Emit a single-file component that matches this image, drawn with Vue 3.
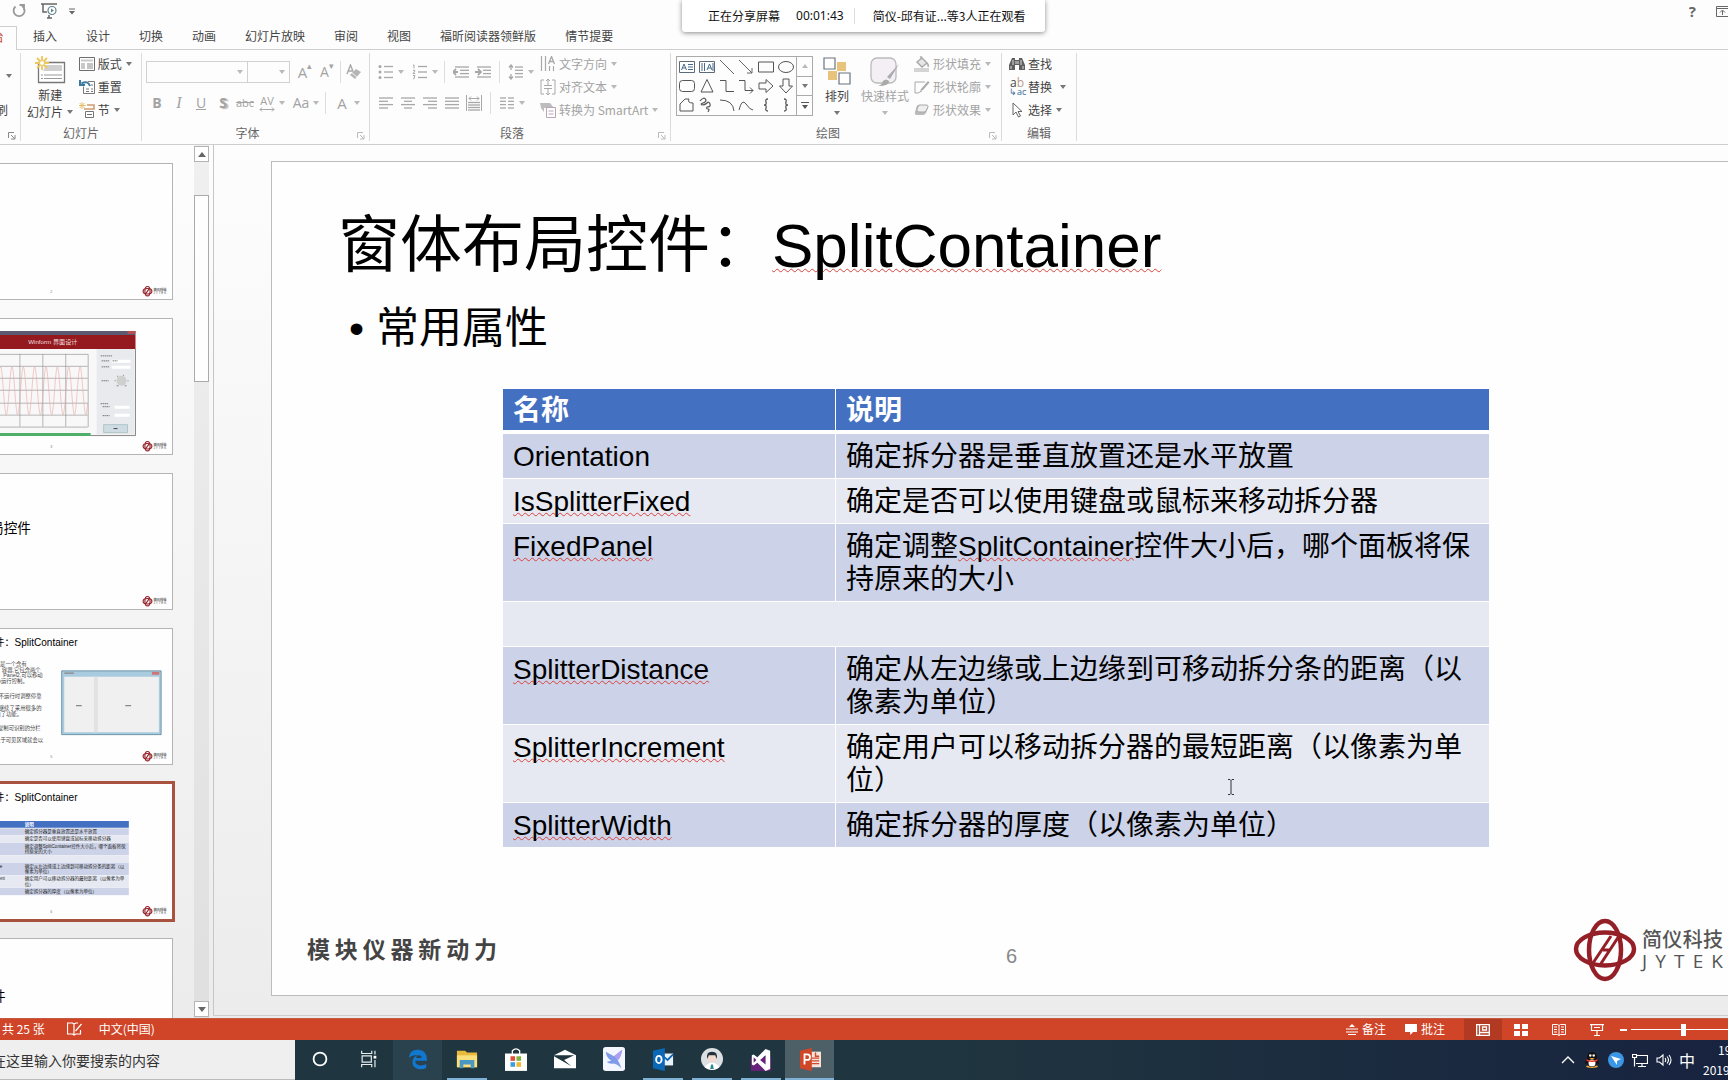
<script setup>
const tabs = ['插入', '设计', '切换', '动画', '幻灯片放映', '审阅', '视图', '福昕阅读器领鲜版', '情节提要']

const rows = [
  { name: 'Orientation', ok: true, text: ['确定拆分器是垂直放置还是水平放置'] },
  { name: 'IsSplitterFixed', text: ['确定是否可以使用键盘或鼠标来移动拆分器'] },
  { name: 'FixedPanel', text: ['确定调整', 'SplitContainer', '控件大小后，哪个面板将保持原来的大小'] },
  { blank: true },
  { name: 'SplitterDistance', text: ['确定从左边缘或上边缘到可移动拆分条的距离（以像素为单位）'] },
  { name: 'SplitterIncrement', text: ['确定用户可以移动拆分器的最短距离（以像素为单位）'], cursor: true },
  { name: 'SplitterWidth', text: ['确定拆分器的厚度（以像素为单位）'] },
]

const miniRows = [
  { y: 273, h: 43, fill: '#ccd2e7', a: 'Orientation', b: ['确定拆分器是垂直放置还是水平放置'] },
  { y: 317, h: 44, fill: '#e6e9f2', a: 'IsSplitterFixed', b: ['确定是否可以使用键盘或鼠标来移动拆分器'] },
  { y: 362, h: 77, fill: '#ccd2e7', a: 'FixedPanel', b: ['确定调整SplitContainer控件大小后，哪个面板将保', '持原来的大小'] },
  { y: 440, h: 44, fill: '#e6e9f2', a: '', b: [] },
  { y: 485, h: 77, fill: '#ccd2e7', a: 'SplitterDistance', b: ['确定从左边缘或上边缘到可移动拆分条的距离（以', '像素为单位）'] },
  { y: 563, h: 77, fill: '#e6e9f2', a: 'SplitterIncrement', b: ['确定用户可以移动拆分器的最短距离（以像素为单', '位）'] },
  { y: 641, h: 44, fill: '#ccd2e7', a: 'SplitterWidth', b: ['确定拆分器的厚度（以像素为单位）'] },
]

const notes = [
  { x: 589, y: 228, t: '是一个含有' },
  { x: 675, y: 263, t: '容器,它包含两个' },
  { x: 687, y: 298, t: 'Panel2,可以移动' },
  { x: 595, y: 333, t: '小运行控制。' },
  { x: 680, y: 427, t: '不运行时调整停靠' },
  { x: 680, y: 499, t: '继续了采用很多的' },
  { x: 560, y: 536, t: '加了功能。' },
  { x: 675, y: 624, t: '复制可识别的分栏' },
  { x: 690, y: 697, t: '大于可见区域就会以' },
]

const thumbs = [
  { kind: 'blank', num: '2' },
  { kind: 'form', num: '3' },
  { kind: 'section', text: '局控件', x: 615, y: 364 },
  { kind: 'intro', num: '5' },
  { kind: 'table', num: '6', active: true },
  { kind: 'section', text: '件', x: 458, y: 380 },
]

const wave = Array.from({ length: 177 }, (_, n) => {
  const x = n / 2
  return `${n ? 'L' : 'M'}${x} ${(72 - 24 * Math.cos(((x - 12) / 11.4) * 2 * Math.PI)).toFixed(1)}`
}).join('')

const g = '#a8a8a8'
const lines = (arr) => arr.map(([x, y, w]) => `<path d="M${x} ${y}h${w}" stroke="${g}" stroke-width="1.3"/>`).join('')

const icons = {
  bullets: `<circle cx="2" cy="2.5" r="1.5" fill="${g}"/><circle cx="2" cy="8" r="1.5" fill="${g}"/><circle cx="2" cy="13.5" r="1.5" fill="${g}"/>` + lines([[6, 2.5, 9], [6, 8, 9], [6, 13.5, 9]]),
  numbers: `<path d="M1 1.500l1-.7v3.600M1 6.500q2-1 2 .5l-2 2.500h2.200M1 11.500h2l-1 1.500q2 1-1 2" stroke="${g}" fill="none"/>` + lines([[6, 2.5, 9], [6, 8, 9], [6, 13.5, 9]]),
  outdent: `<path d="M5 8H0M3 5L0 8l3 3" stroke="${g}" stroke-width="1.8" fill="none"/>` + lines([[2, 3, 14], [7, 6.3, 9], [7, 9.6, 9], [2, 13, 14]]),
  indent: `<path d="M0 8h5M3 5l3 3-3 3" stroke="${g}" stroke-width="1.8" fill="none"/>` + lines([[2, 3, 14], [8, 6.3, 8], [8, 9.6, 8], [2, 13, 14]]),
  spacing: `<path d="M3 1v5M1 3.500l2-2.500 2 2.500M3 10v5M1 12.500L3 15l2-2.500" stroke="${g}" stroke-width="1.3" fill="none"/>` + lines([[7, 3, 8], [7, 6.3, 8], [7, 9.6, 8], [7, 13, 8]]),
  left: lines([[1, 3, 14], [1, 6.3, 9], [1, 9.6, 14], [1, 13, 9]]),
  center: lines([[1, 3, 14], [4, 6.3, 8], [1, 9.6, 14], [4, 13, 8]]),
  right: lines([[1, 3, 14], [6, 6.3, 9], [1, 9.6, 14], [6, 13, 9]]),
  justify: lines([[1, 3, 14], [1, 6.3, 14], [1, 9.6, 14], [1, 13, 14]]),
  distribute: `<path d="M.5 0v16M15.500 0v16M3 3.500h10M5 1.500L3 3.500l2 2M11 1.500l2 2-2 2" stroke="${g}" fill="none"/>` + lines([[2, 7.5, 12], [2, 10, 12], [2, 12.5, 12], [2, 15, 12]]),
  columns: lines([[1, 3, 6], [1, 6.3, 6], [1, 9.6, 6], [1, 13, 6], [9, 3, 6], [9, 6.3, 6], [9, 9.6, 6], [9, 13, 6]]),
  direction: `<path d="M1.500 0v15M5.500 0v15M9.500 10v5M13.500 10v5" stroke="${g}" stroke-width="1.2"/><path d="M8.500 8l3-7.500 3 7.500M9.500 5.500h4" stroke="${g}" stroke-width="1.300" fill="none"/>`,
  alignText: `<path d="M4 1H1v14h3M12 1h3v14h-3M4 6.500h8M4 9.500h8M8 0v6M6 2l2-2 2 2M8 10v6M6 14l2 2 2-2" stroke="${g}" fill="none"/>`,
  smartart: `<path d="M0 1h10l4 5H4v4L1 6z" fill="#bdbdbd"/><path d="M6.500 5.500h9v10h-9zM8.500 9h5M8.500 12h5" fill="#fff" stroke="#b9a5b5"/>`,
  layout: `<path d="M.5 1.500h15v13H.5z" fill="#fff" stroke="#6d6d6d"/><path d="M2 3.500h12v2H2zM2 7h4v6H2z" fill="#c9c9c9"/><path d="M8 8h6M8 10h6M8 12h6" stroke="#8a8a8a"/>`,
  reset: `<path d="M4.500 7.500v7h11v-12H9M7 10h3M12 10h2M7 12.500h3M12 12.500h2M12 6h2" fill="none" stroke="#7a7a7a"/><path d="M11 7Q9 1 2.500 4.500M1 1v5h5" fill="none" stroke="#3c7aa0" stroke-width="2"/>`,
  section: `<path d="M3 0v7M0 3.500h7M.7 1l4.800 5M5.500 1L.7 6" stroke="#e3bd62" stroke-width=".9"/><path d="M8 3h7v4H5" stroke="#d19a6e" fill="none" stroke-width="1.500"/><path d="M6.500 9.500h8v6h-8zM8 12.500h5" stroke="#747474" fill="none"/>`,
  fill: `<path d="M3 6l5-4 5 5-5 4zM7 4V0M12 7q3 1 2 4" stroke="${g}" stroke-width="1.400" fill="#e6e6e6"/><path d="M0 12h15v4H0z" fill="#d4d4d4"/>`,
  outline: `<path d="M11 3H1v11h3l4-2" stroke="${g}" fill="none"/><path d="M7 10L14 2l1.500 1.500L9 11l-3 1z" fill="#aaa"/>`,
  effect: `<path d="M4 3h8q3 0 2 3l-2 5q-1 2-3 2H3q-3 0-2-3l1.500-5Q3 3 4 3z" fill="#bbb"/><path d="M5 3h7q3 0 1.500 3L12 9q-1 1-2 1H5Q2 10 3 7z" fill="#eee" stroke="${g}"/>`,
  find: `<path d="M3 2h3v2h4V2h3l3 7v5h-6v-5H6v5H0V9z" fill="#5f5f5f"/><path d="M7 5v3M9 5v3M4 4v5M12 4v5M2 10v3M14 10v3" stroke="#ddd"/>`,
  select: `<path d="M4 1v12l3-3 2.500 5 2-1L9 9.500h4z" fill="#fff" stroke="#666"/>`,
  eraser: `<path d="M1 10L4.500 1 8 10M2.500 7H6" fill="none" stroke="${g}" stroke-width="1.400"/><path d="M10 5l5 3-6 7-5-4z" fill="#b5b5b5"/><path d="M6 9l5 4" stroke="#eee"/>`,
}

const paraTop = ['bullets', 'v', 'gap', 'numbers', 'v', 'sep', 'outdent', 'indent', 'sep', 'spacing', 'v']
const paraBottom = ['left', 'center', 'right', 'justify', 'distribute', 'sep', 'columns', 'v']
const slideTools = [{ i: 'layout', t: '版式', v: true }, { i: 'reset', t: '重置' }, { i: 'section', t: '节', v: true }]
const textTools = [{ i: 'direction', t: '文字方向' }, { i: 'alignText', t: '对齐文本' }, { i: 'smartart', t: '转换为 SmartArt' }]
const shapeTools = [{ i: 'fill', t: '形状填充' }, { i: 'outline', t: '形状轮廓' }, { i: 'effect', t: '形状效果' }]

const shapes = [
  '<path d="M.5 2.500h15v11H.5z" fill="#fff" stroke="#5d6b78"/><path d="M2.500 11L5 5l2.500 6M3.500 9h3M9 5.500h5M9 8h5M9 10.500h5" stroke="#46698c" fill="none"/>',
  '<path d="M.5 2.500h15v11H.5z" fill="#fff" stroke="#5d6b78"/><path d="M3 4v8M5.500 4v8M8 11l2.500-6 2.500 6M9 9h3M14 4v8" stroke="#46698c" fill="none"/>',
  '<path d="M1 1l14 14" stroke="#666"/>',
  '<path d="M1 1l13 13M14 9v5H9" stroke="#666" fill="none"/>',
  '<path d="M.5 3h15v10H.5z" stroke="#555" fill="none"/>',
  '<ellipse cx="8" cy="8" rx="7.500" ry="5.500" stroke="#555" fill="none"/>',
  '<rect x=".5" y="2.500" width="15" height="11" rx="3" stroke="#555" fill="none"/>',
  '<path d="M8 1.500L14 14H2z" stroke="#555" fill="none"/>',
  '<path d="M1 2.500h6v11h8" stroke="#555" fill="none"/>',
  '<path d="M1 2.500h6v10h8M12 9.500l3 3-3 3" stroke="#555" fill="none"/>',
  '<path d="M1 5h7V1.500L15 8l-7 6.500V11H1z" stroke="#555" fill="none"/>',
  '<path d="M5 1h6v7h3.500L8 15 1.500 8H5z" stroke="#555" fill="none"/>',
  '<path d="M1 14V7l5-5h4q-2 4 4 4v8z" stroke="#555" fill="none"/>',
  '<path d="M1 4q4-5 6-1 0 2-3 3t-1 2q3 0 5-2t3 1-3 3q-1 2 1 2t0 3" stroke="#555" fill="none" stroke-width="1.200"/>',
  '<path d="M1 3q13 0 14 11" stroke="#555" fill="none"/>',
  '<path d="M1 13Q4 1 8 7t7 6" stroke="#555" fill="none"/>',
  '<path d="M10 2Q7 2 8 5t-2 3q3 0 2 3t2 3" stroke="#555" fill="none" stroke-width="1.300"/>',
  '<path d="M6 2q3 0 2 3t2 3q-3 0-2 3t-2 3" stroke="#555" fill="none" stroke-width="1.300"/>',
]

const apps = [
  { n: 'Cortana', s: '<circle cx="12" cy="12" r="7" fill="none" stroke="#fff" stroke-width="2"/>' },
  { n: '任务视图', s: '<path d="M4 3v3h11V3M4 21v-3h11v3M4.500 8.500h10v7h-10zM18.500 3v4M18.500 13v8" fill="none" stroke="#e8edf0" stroke-width="1.300"/><path d="M17 8.500h3v3h-3z" fill="#fff"/>' },
  { n: 'Edge', hover: true, s: '<path d="M2 11Q3 1 13 2q9 1 9 12H9q0 5 6 5 4 0 6-1.500v4Q17 24 12 23q-7-2-6-9 1-5 6-6-7-1-10 3zM10 11h6q0-3-3-3t-3 3z" fill="#1277cf"/>' },
  { n: '文件资源管理器', run: true, s: '<path d="M1 3h9l2 2h11v16H1z" fill="#e8b93c"/><path d="M1 8h22v13H1z" fill="#fadf7c"/><path d="M4 22v-9h16v9h-4v-4H8v4z" fill="#4a97c4"/>' },
  { n: '应用商店', s: '<path d="M8 7V3q4-4 8 0v4" fill="none" stroke="#fff" stroke-width="1.400"/><path d="M0 6h24v19H0z" fill="#fff"/><path d="M6 9h5v5H6z" fill="#dd5138"/><path d="M12.500 9h5v5h-5z" fill="#7db43c"/><path d="M6 15.500h5v5H6z" fill="#3c9fdc"/><path d="M12.500 15.500h5v5h-5z" fill="#f0b92f"/>' },
  { n: '邮件', s: '<path d="M0 8l12-6 12 6v14H0z" fill="#fff"/><path d="M0 8h22l-11 5 8 7L0 9z" fill="#1f353f"/>' },
  { n: '飞鸟', s: '<rect width="24" height="26" y="-1" rx="3" fill="#f3f6ff"/><path d="M3 4l9 5 9-7q-2 10-5 11 3 5 4 9-4-4-8-5-5 1-8-2l5-1Q4 11 3 4z" fill="#7d9be8"/><path d="M12 9l9-7q-2 10-5 11z" fill="#b09df0"/>' },
  { n: 'Outlook', run: true, s: '<path d="M11 6h12v13H11z" fill="#e9f3fb"/><path d="M11 8l6 5 6-6" stroke="#0b68b6" stroke-width="2" fill="none"/><path d="M1 3l13-3v25L1 22z" fill="#0b68b6"/><ellipse cx="7.500" cy="12.500" rx="3" ry="4" fill="none" stroke="#fff" stroke-width="2"/>' },
  { n: '会议', run: true, s: '<circle cx="12" cy="12" r="12" fill="#dce0e3"/><circle cx="12" cy="11" r="4.500" fill="#f2d9cb"/><path d="M7 12Q5 4 12 4t5 8l-1.500-4h-7z" fill="#24313f"/><path d="M4 21q3-5 8-5t8 5q-7 6-16 0z" fill="#fff"/><path d="M11 18h2l1 5h-4z" fill="#2a8c94"/>' },
  { n: 'Visual Studio', run: true, s: '<path d="M1 10h22v15H1z" fill="#68217a"/><path d="M17 1l5 2v20l-5 2L8 16l-4 3-2-1V8l2-1 4 3zM17 8l-6 5 6 5zM4 10v6l3-3z" fill="#fff" fill-rule="evenodd"/>' },
  { n: 'PowerPoint', active: true, s: '<path d="M12 4h12v17H12z" fill="#f8e3dc"/><path d="M14 11h8M14 14h8M14 17h8M18 5v4h4" stroke="#d04727" stroke-width="1.500" fill="none"/><path d="M1 3l13-3v25L1 22z" fill="#d04727"/><path d="M6 18V7h3q3 0 3 3t-3 3H6" fill="none" stroke="#fff" stroke-width="2"/>' },
]

const tray = [
  { n: '显示隐藏的图标', s: '<path d="M2 11l6-6 6 6" fill="none" stroke="#fff" stroke-width="1.400"/>' },
  { n: 'QQ', s: '<ellipse cx="8" cy="14.500" rx="6" ry="1.500" fill="#e8a531"/><path d="M8 0q5 0 5 6 2 3 2 6l-2-1q-1 4-5 4t-5-4l-2 1q0-3 2-6 0-6 5-6z" fill="#111"/><ellipse cx="8" cy="11" rx="3.500" ry="3.500" fill="#fff"/><circle cx="6.300" cy="3.500" r="1.200" fill="#fff"/><circle cx="9.700" cy="3.500" r="1.200" fill="#fff"/><path d="M2.500 7q5 3 11 0v2q-5 2-11 0z" fill="#e33a2e"/><path d="M5 6h6L8 7.500z" fill="#eaa62c"/>' },
  { n: '消息', s: '<circle cx="8" cy="8" r="8" fill="#3b96e6"/><path d="M3 4l10 3-4 2v4q-2-3-6-9z" fill="#fff"/>' },
  { n: '网络', s: '<path d="M4 3.500h11.500v8H4M10 11.500v3M6 14.500h8M.5 2.500h4v3h-4zM2.500 6v8.500" fill="none" stroke="#fff" stroke-width="1.200"/>' },
  { n: '音量', s: '<path d="M1 6h2.500L7 3v10l-3.500-3H1zM9 6q1.500 2 0 4M11 4.500q3 3.500 0 7M13 3q4 5 0 10" fill="none" stroke="#fff" stroke-width="1.100"/>' },
]
</script>

<template>
  <div class="app">
    <header class="titlebar">
      <div class="quick">
        <button aria-label="重复"><svg width="14" height="14" viewBox="0 0 14 14"><path d="M3.500 2.500A5.500 5.500 0 1 0 10 2M7.500 1H12v5" fill="none" stroke="#999" stroke-width="1.800" /></svg></button>
        <button aria-label="从头开始"><svg width="16" height="16" viewBox="0 0 16 16"><path d="M0 1h16M2 1v8h4M6 15h5M8 12v3" fill="none" stroke="#666" stroke-width="1.500" /><circle cx="11" cy="7.500" r="4" fill="#fff" stroke="#608090" stroke-width="1.200" /><path d="M10 5.500v4l3-2z" fill="#608a78" /></svg></button>
        <button aria-label="自定义快速访问工具栏"><svg width="6" height="7" viewBox="0 0 6 7"><path d="M0 1h6" stroke="#666" /><path d="M0 3h6L3 6.500z" fill="#666" /></svg></button>
      </div>
      <div class="wincontrols">
        <button class="help">?</button>
        <button aria-label="功能区显示选项"><svg width="12" height="12" viewBox="0 0 12 12"><path d="M.5 1.500h14v10H.5zM.5 3.500h14M6.500 10V6M4 7.500L6.500 5 9 7.500" fill="none" stroke="#666" /></svg></button>
      </div>
      <div class="share">
        <span>正在分享屏幕</span><time>00:01:43</time><i></i><span>简仪-邱有证...等3人正在观看</span>
      </div>
    </header>

    <nav class="tabs">
      <button class="current">台</button>
      <button v-for="t in tabs" :key="t">{{ t }}</button>
    </nav>

    <section class="ribbon">
      <div class="group g-clip">
        <div class="stack">
          <span></span>
          <button class="tool" aria-label="复制选项"><svg class="v" viewBox="0 0 8 5"><path d="M1 0h6L4 4z" /></svg></button>
          <button class="tool cut">刷</button>
        </div>
        <footer><button class="launch" aria-label="剪贴板选项"><svg width="8" height="8" viewBox="0 0 8 8"><path d="M.5 6V.5H6M3 3l4 4M7 3v4H3" /></svg></button></footer>
      </div>

      <div class="group g-slides">
        <div class="body">
          <button class="big">
            <svg width="32" height="30" viewBox="0 0 32 30"><path d="M4.500 6.500h26v20h-26z" fill="#fff" stroke="#777" stroke-width="1.300" /><path d="M12 9h16v6H9z" fill="#d0d0d0" /><path d="M7 19h21M7 22.500h21" stroke="#999" stroke-dasharray="2 1 20 0" /><path d="M8 0v14M1 7h14M3 2l10 10M13 2L3 12" stroke="#ecc75c" stroke-width="1.800" /><circle cx="8" cy="7" r="2.500" fill="#fff" stroke="#ecc75c" /></svg>
            <span>新建</span><span>幻灯片 <svg class="v" viewBox="0 0 8 5"><path d="M1 0h6L4 4z" /></svg></span>
          </button>
          <div class="stack">
            <button v-for="t in slideTools" :key="t.t" class="tool"><svg class="ic" viewBox="0 0 16 16" v-html="icons[t.i]" />{{ t.t }}<svg v-if="t.v" class="v" viewBox="0 0 8 5"><path d="M1 0h6L4 4z" /></svg></button>
          </div>
        </div>
        <footer><span>幻灯片</span></footer>
      </div>

      <div class="group g-font">
        <div class="lines off">
          <div class="line">
            <span class="combo wide"><select aria-label="字体" disabled></select><svg class="v" viewBox="0 0 8 5"><path d="M1 0h6L4 4z" /></svg></span>
            <span class="combo"><select aria-label="字号" disabled></select><svg class="v" viewBox="0 0 8 5"><path d="M1 0h6L4 4z" /></svg></span>
            <i class="gap"></i>
            <button class="t grow" disabled>A<sup>▴</sup></button>
            <button class="t shrink" disabled>A<sup>▾</sup></button>
            <i class="sep tight"></i>
            <button class="t" disabled aria-label="清除格式"><svg class="ic" viewBox="0 0 16 16" v-html="icons.eraser" /></button>
          </div>
          <div class="line">
            <button class="t" disabled><b>B</b></button>
            <button class="t serif" disabled><em>I</em></button>
            <button class="t" disabled><u>U</u></button>
            <button class="t" disabled><b class="sh">S</b></button>
            <button class="t sm" disabled><s>abc</s></button>
            <button class="t av" disabled>AV<svg width="16" height="5" viewBox="0 0 16 5"><path d="M1 2.500h14M3 .5l-2 2 2 2M13 .5l2 2-2 2" fill="none" stroke="#a8a8a8" /></svg></button>
            <svg class="v" viewBox="0 0 8 5"><path d="M1 0h6L4 4z" /></svg><i class="gap"></i>
            <button class="t" disabled>Aa</button><svg class="v" viewBox="0 0 8 5"><path d="M1 0h6L4 4z" /></svg>
            <i class="sep"></i>
            <button class="t fc" disabled>A</button><svg class="v" viewBox="0 0 8 5"><path d="M1 0h6L4 4z" /></svg>
          </div>
        </div>
        <footer><span>字体</span><button class="launch off" aria-label="字体选项"><svg width="8" height="8" viewBox="0 0 8 8"><path d="M.5 6V.5H6M3 3l4 4M7 3v4H3" /></svg></button></footer>
      </div>

      <div class="group g-para">
        <div class="body">
          <div class="lines off">
            <div v-for="(line, n) in [paraTop, paraBottom]" :key="n" class="line">
              <template v-for="(k, j) in line" :key="j">
                <svg v-if="k === 'v'" class="v" viewBox="0 0 8 5"><path d="M1 0h6L4 4z" /></svg>
                <i v-else-if="k === 'sep' || k === 'gap'" :class="k"></i>
                <button v-else class="t" disabled :aria-label="k"><svg class="ic" viewBox="0 0 16 16" v-html="icons[k]" /></button>
              </template>
            </div>
          </div>
          <div class="stack off">
            <button v-for="t in textTools" :key="t.t" class="tool" disabled><svg class="ic" viewBox="0 0 16 16" v-html="icons[t.i]" />{{ t.t }}<svg class="v" viewBox="0 0 8 5"><path d="M1 0h6L4 4z" /></svg></button>
          </div>
        </div>
        <footer><span>段落</span><button class="launch off" aria-label="段落选项"><svg width="8" height="8" viewBox="0 0 8 8"><path d="M.5 6V.5H6M3 3l4 4M7 3v4H3" /></svg></button></footer>
      </div>

      <div class="group g-draw">
        <div class="body">
          <div class="gallery">
            <div class="shapes"><button v-for="(s, n) in shapes" :key="n" :aria-label="'形状 ' + (n + 1)"><svg class="ic" viewBox="0 0 16 16" v-html="s" /></button></div>
            <div class="scroll">
              <button class="off" aria-label="上一行"><svg class="v" viewBox="0 0 8 5"><path d="M1 4h6L4 0z" /></svg></button>
              <button aria-label="下一行"><svg class="v" viewBox="0 0 8 5"><path d="M1 0h6L4 4z" /></svg></button>
              <button aria-label="其他"><svg width="8" height="8" viewBox="0 0 8 8"><path d="M0 0h8v1H0zM1 3h6L4 7z" fill="#555" /></svg></button>
            </div>
          </div>
          <button class="big">
            <svg width="28" height="30" viewBox="0 0 28 30"><path d="M14 5h9v9h-9zM5 14h9v9H5z" fill="#e8c37c" /><path d="M1 1h11v11H1zM16 16h11v11H16z" fill="#fff" stroke="#6a7480" stroke-width="1.200" /></svg>
            <span>排列</span><svg class="v" viewBox="0 0 8 5"><path d="M1 0h6L4 4z" /></svg>
          </button>
          <button class="big off" disabled>
            <svg width="30" height="30" viewBox="0 0 30 30"><rect x="1" y="1" width="25" height="25" rx="6" fill="#f3eff5" stroke="#bbb" stroke-width="1.300" /><path d="M29 7l-9 15-3-2z" fill="#aaa" /><path d="M8 29q4-1 5-5 3-3 6 0 1 5-11 5z" fill="#aaa" /></svg>
            <span>快速样式</span><svg class="v" viewBox="0 0 8 5"><path d="M1 0h6L4 4z" /></svg>
          </button>
          <div class="stack off">
            <button v-for="t in shapeTools" :key="t.t" class="tool" disabled><svg class="ic" viewBox="0 0 16 16" v-html="icons[t.i]" />{{ t.t }}<svg class="v" viewBox="0 0 8 5"><path d="M1 0h6L4 4z" /></svg></button>
          </div>
        </div>
        <footer><span>绘图</span><button class="launch off" aria-label="绘图选项"><svg width="8" height="8" viewBox="0 0 8 8"><path d="M.5 6V.5H6M3 3l4 4M7 3v4H3" /></svg></button></footer>
      </div>

      <div class="group g-edit">
        <div class="stack">
          <button class="tool"><svg class="ic" viewBox="0 0 16 16" v-html="icons.find" />查找</button>
          <button class="tool"><span class="repl"><span>a<i>b</i></span><span class="ac">↳ac</span></span>替换<svg class="v far" viewBox="0 0 8 5"><path d="M1 0h6L4 4z" /></svg></button>
          <button class="tool"><svg class="ic" viewBox="0 0 16 16" v-html="icons.select" />选择<svg class="v" viewBox="0 0 8 5"><path d="M1 0h6L4 4z" /></svg></button>
        </div>
        <footer><span>编辑</span></footer>
      </div>
    </section>

    <main class="work">
      <aside class="panel">
        <div v-for="(t, n) in thumbs" :key="n" class="thumb" :class="{ active: t.active }">
          <svg viewBox="424 0 1060 835" preserveAspectRatio="xMaxYMin slice">
            <g v-if="t.kind === 'form'">
              <g transform="translate(424 0) scale(6.14)">
                <path d="M0 12h136v105H0z" fill="#f8f8f8" /><path d="M0 12h136v4H0z" fill="#5c5a70" /><path d="M128 12h8v3h-8z" fill="#b55050" />
                <path d="M0 16h136v14H0z" fill="#941a20" /><path d="M97 30h38v86H97z" fill="#e9eaed" />
                <path d="M0 35.500h88.500v73M20 35v73M43 35v73M66 35v73M0 47.500h88M0 59.500h88M0 71.500h88M0 84.500h88M0 96.500h88M0 108.500h88" fill="none" stroke="#888" stroke-width=".6" />
                <path :d="wave" fill="none" stroke="#e8a8a4" stroke-width=".6" />
                <path d="M0 114.500h91v3H0z" fill="#4fae69" /><path d="M91 117h45V30" fill="none" stroke="#555" stroke-width=".7" />
                <path d="M112 41h19v3h-19zM112 47h19v3h-19zM115 87h15v3h-15zM115 95h15v3h-15z" fill="#fff" />
                <circle cx="122" cy="62" r="5" fill="#cfcfcf" /><path d="M118 57v1M124 56v1M115 62h1M128 62h1M117 67h2M125 67h2" stroke="#888" />
                <path d="M101 37h12M102 42h8M102 48h8M102 62h7M101 85h8M103 88h7M103 97h7M113 42h5" stroke="#777" stroke-width="1" stroke-dasharray="1.500 .5" />
                <path d="M104 106h24v8h-24z" fill="#cfdbe2" stroke="#8aa" stroke-width=".5" /><path d="M114 110h4" stroke="#444" />
              </g>
              <text x="750" y="156" font-size="38" fill="#f0dcdc" text-anchor="middle">Winform 界面设计</text>
            </g>
            <text v-else-if="t.kind === 'section'" :x="t.x" :y="t.y" font-size="84" text-anchor="end">{{ t.text }}</text>
            <g v-else-if="t.kind === 'intro'">
              <text x="902" y="106" font-size="62" text-anchor="end">件：SplitContainer</text>
              <text v-for="l in notes" :key="l.t" :x="l.x" :y="l.y" font-size="33" fill="#444" text-anchor="end">{{ l.t }}</text>
              <path d="M804 258h613v393H804z" fill="#a9cbe0" stroke="#5a8798" stroke-width="5" />
              <path d="M820 294h583v343H820z" fill="#f0f0f0" /><path d="M1003 294h24v343h-24z" fill="#e2e2e2" />
              <path d="M1360 264h46v18h-46z" fill="#c77" /><path d="M820 272h60M892 472h36M1196 472h36" stroke="#888" stroke-width="8" />
            </g>
            <g v-else-if="t.kind === 'table'">
              <text x="902" y="106" font-size="62" text-anchor="end">件：SplitContainer</text>
              <path d="M232 228h986v41H232z" fill="#4470c2" /><text x="576" y="260" font-size="28" font-weight="700" fill="#fff">说明</text>
              <g v-for="r in miniRows" :key="r.y" font-size="28" fill="#222">
                <rect x="232" :y="r.y" width="986" :height="r.h" :fill="r.fill" />
                <text x="243" :y="r.y + 31">{{ r.a }}</text>
                <text v-for="(b, k) in r.b" :key="k" x="576" :y="r.y + 31 + k * 33">{{ b }}</text>
              </g>
            </g>
            <text v-if="t.num" x="740" y="796" font-size="22" fill="#777" text-anchor="middle">{{ t.num }}</text>
            <g fill="none" stroke="#94202a" stroke-width="7">
              <ellipse cx="1333" cy="784" rx="27" ry="17" /><ellipse cx="1333" cy="784" rx="16" ry="29" /><path d="M1323 798l20-28" />
            </g>
            <text x="1370" y="780" font-size="20" font-weight="700" fill="#555">简仪科技</text>
            <text x="1370" y="804" font-size="19" fill="#555">J Y T E K</text>
          </svg>
        </div>
      </aside>
      <div class="vscroll">
        <button aria-label="向上滚动"><svg width="8" height="5" viewBox="0 0 8 5"><path d="M0 5h8L4 0z" fill="#666" /></svg></button>
        <div class="track"><div class="knob"></div></div>
        <button aria-label="向下滚动"><svg width="8" height="5" viewBox="0 0 8 5"><path d="M0 0h8L4 5z" fill="#666" /></svg></button>
      </div>
      <div class="editor">
        <article class="slide">
          <h1>窗体布局控件：<span class="sp">SplitContainer</span></h1>
          <ul><li>常用属性</li></ul>
          <table>
            <thead><tr><th class="c1">名称</th><th>说明</th></tr></thead>
            <tbody>
              <tr v-for="(r, n) in rows" :key="n">
                <td v-if="r.blank" colspan="2">&nbsp;</td>
                <template v-else>
                  <td><span :class="{ sp: !r.ok }">{{ r.name }}</span></td>
                  <td>
                    <template v-for="(x, k) in r.text" :key="k"><span v-if="k === 1" class="sp">{{ x }}</span><template v-else>{{ x }}</template></template>
                    <svg v-if="r.cursor" class="cursor" width="8" height="16" viewBox="0 0 8 16"><path d="M1 .5h2l1 1 1-1h2M4 1.500v13M1 15.500h2l1-1 1 1h2" fill="none" stroke="#333" /></svg>
                  </td>
                </template>
              </tr>
            </tbody>
          </table>
          <footer class="foot">
            <p class="motto">模块仪器新动力</p>
            <span class="page">6</span>
            <div class="brand">
              <svg width="64" height="64" viewBox="0 0 64 64" fill="none" stroke="#941f27">
                <ellipse cx="32" cy="31" rx="29" ry="16.500" stroke-width="4.500" /><ellipse cx="32" cy="32" rx="16" ry="29" stroke-width="4.500" />
                <path d="M38 18L20 45M46 18L27 47M30 32h7" stroke-width="3" />
              </svg>
              <div><p>简仪科技</p><p class="latin"><span v-for="c in 'JYTEK'" :key="c">{{ c }}</span></p></div>
            </div>
          </footer>
        </article>
      </div>
    </main>

    <div class="status">
      <span class="count">共 25 张</span>
      <button class="spell" aria-label="拼写检查"><svg width="16" height="14" viewBox="0 0 16 14"><path d="M7 2v11M7 2L5.500 1H.5v11h5L7 13l2-1h4.500V8M7 2l2-1h2M8.500 9l6-7" fill="none" stroke="#fff" stroke-width="1.200" /></svg></button>
      <button>中文(中国)</button>
      <div class="right">
        <button class="note"><svg width="12" height="12" viewBox="0 0 12 12"><path d="M0 6h12M0 9h12M2 11.500h8" stroke="#fff" /><path d="M3 4l3-3 3 3z" fill="#fff" /></svg>备注</button>
        <button class="note"><svg width="12" height="12" viewBox="0 0 12 12"><path d="M0 1h12v8H8l-2.500 3L5 9H0z" fill="#fff" /></svg>批注</button>
        <div class="views">
          <button class="on" aria-label="普通视图"><svg width="14" height="12" viewBox="0 0 14 12"><path d="M.7.7h12.600v10.600H.7zM3.500 1v10M3.500 8.500H13M6.500 3h4v3h-4z" fill="none" stroke="#fff" stroke-width="1.300" /></svg></button>
          <button aria-label="幻灯片浏览"><svg width="14" height="12" viewBox="0 0 14 12"><path d="M0 0h6v5H0zM8 0h6v5H8zM0 7h6v5H0zM8 7h6v5H8z" fill="#fff" /></svg></button>
          <button aria-label="阅读视图"><svg width="14" height="12" viewBox="0 0 14 12"><path d="M7 1.500L5.500.5h-5v10h5l1.500 1 1.500-1h5V.5h-5zM7 1.500v10M2 3h3M2 5.500h3M2 8h3M9 3h3M9 5.500h3M9 8h3" fill="none" stroke="#fff" /></svg></button>
          <button aria-label="幻灯片放映"><svg width="14" height="12" viewBox="0 0 14 12"><path d="M0 .7h14M1.500 1v5.500h11V1M4 3.500h6M7 6.500v5M4 11.500h6" fill="none" stroke="#fff" stroke-width="1.200" /></svg></button>
        </div>
        <button class="minus" aria-label="缩小"></button>
        <input type="range" min="0" max="100" value="54" aria-label="缩放" />
      </div>
    </div>

    <div class="taskbar">
      <input class="search" type="text" aria-label="搜索" placeholder="在这里输入你要搜索的内容" />
      <button v-for="a in apps" :key="a.n" class="app-btn" :class="{ hover: a.hover, run: a.run, active: a.active }" :aria-label="a.n"><svg width="22" height="24" viewBox="0 -1 24 26" v-html="a.s" /></button>
      <div class="tray">
        <button v-for="t in tray" :key="t.n" :aria-label="t.n"><svg width="16" height="16" viewBox="0 0 16 16" v-html="t.s" /></button>
        <button class="ime">中</button>
        <div class="clock"><span class="hour">19</span><span>2019</span></div>
      </div>
    </div>
  </div>
</template>

<style>
body { margin: 0; overflow: hidden; }
</style>

<style scoped>
.app { height: 100vh; display: flex; flex-direction: column; overflow: hidden; background: #fdfdfd; color: #444; font: 12px/16px "Noto Sans CJK SC", sans-serif; }
button { border: 0; padding: 0; margin: 0; background: none; font: inherit; color: inherit; display: flex; align-items: center; justify-content: center; white-space: nowrap; }
svg { display: block; flex: none; }
p, h1, ul { margin: 0; padding: 0; }

.titlebar { flex: none; height: 26px; display: flex; justify-content: space-between; position: relative; }
.quick { display: flex; align-items: center; gap: 12px; height: 22px; padding-left: 12px; }
.quick button:nth-child(2) { margin-left: 3px; }
.wincontrols { display: flex; align-items: center; gap: 20px; height: 22px; overflow: hidden; }
.wincontrols .help { font: 700 15px/20px "Open Sans", sans-serif; color: #666; }
.share { position: absolute; left: 682px; top: 0; width: 337px; height: 32px; padding-left: 26px; display: flex; align-items: center; background: #fff; border-radius: 0 0 3px 3px; box-shadow: 0 1px 5px rgba(0, 0, 0, .45); color: #111; z-index: 2; white-space: nowrap; }
.share time { margin-left: 16px; font-family: "Noto Sans", sans-serif; }
.share i { width: 1px; height: 16px; background: #ddd; margin: 0 18px 0 10px; }

.tabs { flex: none; height: 23px; display: flex; gap: 29px; border-bottom: 1px solid #cfcfcf; }
.tabs button { height: 20px; }
.tabs .current { width: 17px; height: 24px; padding: 0 12px 3px 0; box-sizing: border-box; justify-content: flex-end; overflow: hidden; color: #c8492c; border: 1px solid #cfcfcf; border-width: 1px 1px 0 0; background: #fdfdfd; margin: 0 -13px -1px 0; }

.ribbon { flex: none; height: 94px; display: flex; border-bottom: 1px solid #cfcfcf; }
.group { display: flex; flex-direction: column; margin: 3px 0; border-right: 1px solid #dcdcdc; box-sizing: border-box; }
.g-clip { width: 21px; }
.g-slides { width: 121px; }
.g-font { width: 228px; }
.g-para { width: 301px; }
.g-draw { width: 331px; }
.g-edit { width: 75px; }
.group footer { display: flex; align-items: center; height: 17px; margin-top: auto; color: #666; }
.group footer span { flex: 1; text-align: center; }
.launch { width: 16px; height: 14px; padding-top: 6px; }
.g-clip footer { justify-content: flex-end; }
.launch path { fill: none; stroke: #888; }
.body { display: flex; }
.stack { height: 68px; display: flex; flex-direction: column; justify-content: space-between; }
.g-clip .stack { align-items: flex-end; }
.tool { height: 22px; gap: 3px; justify-content: flex-start; }
.cut { width: 8px; overflow: hidden; justify-content: flex-end; margin-right: 12px; }
.g-clip .tool:nth-child(2) { margin-right: 7px; }
.ic { width: 16px; height: 16px; }
.v { width: 8px; height: 5px; display: inline-block; fill: #777; }
.off { color: #a3a3a3; }
.off .v { fill: #b9b9b9; }
.launch.off path { stroke: #bbb; }
.big { flex-direction: column; justify-content: flex-start; height: 66px; padding-top: 3px; }
.big span { line-height: 17px; }
.big > .v { margin-top: 6px; }
.g-slides .big { margin: 0 5px 0 6px; }
.g-slides .big .v { vertical-align: 2px; }
.lines { display: flex; flex-direction: column; gap: 9px; padding: 8px 0 0 4px; }
.line { display: flex; align-items: center; height: 22px; }
.t { width: 22px; height: 22px; font: 14px/22px "Open Sans", sans-serif; }
.t.serif { font: 16px/22px "Liberation Serif", serif; }
.t.sm { font-size: 11px; }
.t.grow { font-size: 15px; }
.t.fc { font-size: 15px; }
.t sup { font-size: 9px; line-height: 9px; align-self: flex-start; }
.sh { text-shadow: 2px 1px 1px #bbb; }
.t.av { flex-direction: column; font-size: 11px; line-height: 12px; }
.sep { width: 1px; height: 22px; background: #ddd; margin: 0 5px; flex: none; }
.sep.tight { margin: 0 2px; }
.gap { width: 4px; flex: none; }
.combo { display: flex; align-items: center; width: 43px; height: 22px; border: 1px solid #d2d2d2; box-sizing: border-box; margin-left: -1px; padding-right: 3px; }
.combo.wide { width: 102px; margin-left: 0; }
.combo select { flex: 1; min-width: 0; height: 18px; border: 0; background: none; appearance: none; }
.g-para .line { padding-left: 1px; }
.g-para .body .stack { margin-left: 5px; }
.gallery { display: flex; width: 137px; height: 60px; box-sizing: border-box; border: 1px solid #aaa; margin: 3px 0 0 5px; }
.shapes { flex: 1; display: grid; grid-template-columns: repeat(6, 1fr); grid-template-rows: repeat(3, 1fr); }
.scroll { width: 15px; display: flex; flex-direction: column; border-left: 1px solid #aaa; }
.scroll button { flex: 1; }
.scroll button + button { border-top: 1px solid #aaa; }
.g-draw .big { width: 48px; padding-top: 4px; }
.g-draw .big.off { padding-top: 4px; height: 65px; }
.g-draw .big span { line-height: 18px; }
.g-draw .stack { margin-left: 5px; }
.g-edit .stack { padding-left: 7px; }
.far { margin-left: 4px; }
.repl { display: flex; flex-direction: column; width: 16px; font: 12px/9px "Open Sans", sans-serif; }
.repl i { color: #b98; font-style: normal; }
.ac { color: #3a6a9a; font-size: 9px; }

.work { flex: 1; min-height: 0; display: flex; background: linear-gradient(#fdfdfd, #ececec); }
.panel { width: 194px; overflow: hidden; padding-top: 18px; box-sizing: border-box; }
.thumb { width: 172px; height: 135px; border: 1px solid #b4b4b4; border-left: 0; background: #fefefe; margin-bottom: 18px; overflow: hidden; }
.thumb.active { box-shadow: 0 0 0 2px #a9523f; border-color: #a9523f; }
.thumb svg { width: 172px; height: 135px; font-family: "Liberation Sans", "Noto Sans CJK SC", sans-serif; }
.vscroll { width: 15px; display: flex; flex-direction: column; padding: 1px 0; background: rgba(0, 0, 0, .05); }
.vscroll button { height: 16px; border: 1px solid #b4b4b4; background: #fff; }
.track { flex: 1; padding-top: 33px; }
.knob { height: 23%; border: 1px solid #aaa; background: #fefefe; }
.editor { flex: 1; min-width: 0; margin: 0 0 2px 4px; border-left: 1px solid #c6c6c6; border-bottom: 1px solid #ccc; padding: 16px 0 19px 57px; display: flex; }
.slide { flex: 1; min-width: 0; border: 1px solid #bcbcbc; border-right: 0; background: #fefefe; color: #000; display: flex; flex-direction: column; font-family: "Liberation Sans", "Noto Sans CJK SC", sans-serif; padding-top: 46px; }
h1 { font-size: 62px; line-height: 76px; font-weight: 400; padding-left: 66px; white-space: nowrap; }
ul { list-style: none; padding-left: 77px; margin-top: 19px; }
li { font-size: 43px; line-height: 50px; display: flex; gap: 12px; }
li::before { content: "•"; }
.sp { text-decoration: underline wavy #d8433c 1px; text-decoration-skip-ink: none; text-underline-offset: 1px; }
table { margin: 36px 239px 0 231px; border-collapse: separate; border-spacing: 0; font-size: 28px; line-height: 33px; table-layout: fixed; }
th { text-align: left; background: #4470c2; color: #fff; padding: 5px 10px 3px; border-bottom: 4px solid #fff; }
.c1 { width: 312px; }
td { padding: 6px 10px 5px; vertical-align: top; background: #ccd2e7; border-bottom: 1px solid #fff; position: relative; }
tr > :nth-child(2) { border-left: 1px solid #fff; }
tbody tr:nth-child(even) td { background: #e6e9f2; }
.cursor { position: absolute; left: 391px; top: 54px; }
.foot { margin-top: auto; display: grid; grid-template-columns: 1fr auto 1fr; align-items: center; padding: 0 5px 13px 28px; }
.motto { width: 190px; margin-left: 7px; font-size: 23px; line-height: 28px; font-weight: 700; color: #444; text-align-last: justify; }
.page { font-size: 20px; line-height: 24px; color: #888; padding-top: 12px; }
.brand { justify-self: end; display: flex; align-items: center; gap: 5px; color: #555; }
.brand p { width: 81px; font-size: 20px; line-height: 22px; font-weight: 500; text-align-last: justify; }
.brand .latin { display: flex; justify-content: space-between; font: 500 19px/20px "Open Sans", sans-serif; }

.status { flex: none; height: 22px; display: flex; align-items: center; background: #d04427; color: #fff; border-top: 1px solid #c55a42; box-sizing: border-box; padding-bottom: 2px; }
.count { margin-left: 2px; }
.spell { margin: 0 16px 0 22px; }
.right { margin-left: auto; display: flex; align-items: center; height: 100%; }
.note { gap: 4px; margin-right: 19px; }
.views { display: flex; height: 21px; margin-bottom: -2px; }
.views button { width: 38px; }
.views .on { background: #b23a22; }
.minus { width: 7px; height: 2px; background: #fff; margin: 2px 4px 0 4px; }
.right input { appearance: none; width: 97px; height: 12px; margin: 2px 0 0; background: linear-gradient(#fff, #fff) center / 100% 1px no-repeat; }
.right input::-webkit-slider-thumb { appearance: none; width: 5px; height: 12px; background: #fff; }

.taskbar { flex: none; height: 40px; display: flex; background: linear-gradient(90deg, #1f353f 0, #1f353f 55%, #18233f); color: #fff; }
.search { width: 295px; border: 0; border-bottom: 1px solid #bbb; margin: 0; padding: 0; box-sizing: border-box; background: #efefef; font: 14px/20px "Noto Sans CJK SC", sans-serif; text-indent: -8px; border-radius: 0; }
.search::placeholder { color: #333; opacity: 1; }
.app-btn { width: 49px; border-bottom: 2px solid transparent; box-sizing: border-box; }
.hover { background: #2a424d; }
.run { background: linear-gradient(#7fb0d6, #7fb0d6) center bottom / 40px 2px no-repeat border-box; }
.active.app-btn { background: #4d6068; border-bottom-color: #7fb0d6; }
.tray { margin-left: auto; display: flex; align-items: center; }
.tray button { width: 24px; height: 40px; }
.tray .ime { font-size: 16px; width: 22px; }
.clock { width: 25px; margin-left: 5px; display: flex; flex-direction: column; line-height: 20px; overflow: hidden; }
.clock .hour { padding-left: 15px; }
</style>
